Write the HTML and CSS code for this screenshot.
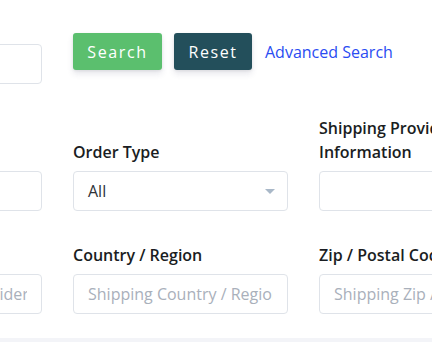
FILE: index.html
```html
<!DOCTYPE html>
<html>
<head>
<meta charset="utf-8">
<link rel="stylesheet" href="styles.css">
</head>
<body>
<div class="filters">
  <div class="field">
    <label class="label">Order No.</label>
    <input class="input" type="text">
  </div>
  <div class="actions">
    <button class="btn btn-search">Search</button>
    <button class="btn btn-reset">Reset</button>
    <a class="adv-link" href="#">Advanced Search</a>
  </div>
  <div class="field"></div>

  <div class="field">
    <label class="label">Tracking</label>
    <input class="input" type="text">
  </div>
  <div class="field">
    <label class="label">Order Type</label>
    <div class="select">
      <span>All</span>
      <span class="caret"></span>
    </div>
  </div>
  <div class="field">
    <label class="label">Shipping Provider Information</label>
    <input class="input" type="text">
  </div>
  <div class="field">
    <label class="label">Status</label>
    <input class="input" type="text">
  </div>

  <div class="field">
    <label class="label">Provider</label>
    <input class="input" type="text" placeholder="Search Shipping Provider">
  </div>
  <div class="field">
    <label class="label">Country / Region</label>
    <input class="input" type="text" placeholder="Shipping Country / Region">
  </div>
  <div class="field">
    <label class="label">Zip / Postal Code</label>
    <input class="input" type="text" placeholder="Shipping Zip / Postal Code">
  </div>
  <div class="field">
    <label class="label">City</label>
    <input class="input" type="text" placeholder="Shipping City">
  </div>
</div>
<div class="footer-band"></div>
</body>
</html>
```

FILE: styles.css
```css
* { box-sizing: border-box; }
html, body {
  margin: 0;
  padding: 0;
  background: #ffffff;
  font-family: "Open Sans", "Noto Sans", sans-serif;
  overflow: hidden;
}
.filters {
  display: grid;
  grid-template-columns: repeat(4, 215px);
  column-gap: 31px;
  row-gap: 32px;
  margin-left: -173px;
  padding: 13px 0 24px 0;
  width: 1000px;
}
.field {
  display: flex;
  flex-direction: column;
  justify-content: flex-end;
  gap: 7px;
  min-width: 0;
}
.label {
  font-size: 16px;
  line-height: 24px;
  font-weight: 600;
  color: #1a1d22;
}
.input, .select {
  height: 40px;
  width: 100%;
  border: 1px solid #dfe3e9;
  border-radius: 4px;
  padding: 0 14px;
  font-family: inherit;
  font-size: 16px;
  color: #2e3238;
  background: #fff;
  outline: none;
}
.input::placeholder { color: #a9b0bb; }
.select {
  display: flex;
  align-items: center;
  justify-content: space-between;
}
.caret {
  width: 0;
  height: 0;
  border-left: 5px solid transparent;
  border-right: 5px solid transparent;
  border-top: 5px solid #a9b8c8;
  margin-right: -2px;
}
.actions {
  grid-column: 2 / span 2;
  display: flex;
  align-items: center;
  gap: 12px;
  align-self: end;
  margin-bottom: 14px;
}
.btn {
  height: 37px;
  border: none;
  border-radius: 3px;
  font-family: inherit;
  font-size: 16px;
  letter-spacing: 1.6px;
  color: #fff;
  padding: 0 13px;
  box-shadow: 0 4px 6px rgba(50, 50, 93, 0.11), 0 1px 3px rgba(0, 0, 0, 0.08);
}
.btn-search { background: #5bbf6e; width: 89px; }
.btn-reset { background: #234f5b; width: 78px; }
.adv-link {
  color: #2a4cf2;
  font-size: 16px;
  text-decoration: none;
  margin-left: 1px;
}
.footer-band {
  height: 6px;
  background: #f3f4f8;
}
```
